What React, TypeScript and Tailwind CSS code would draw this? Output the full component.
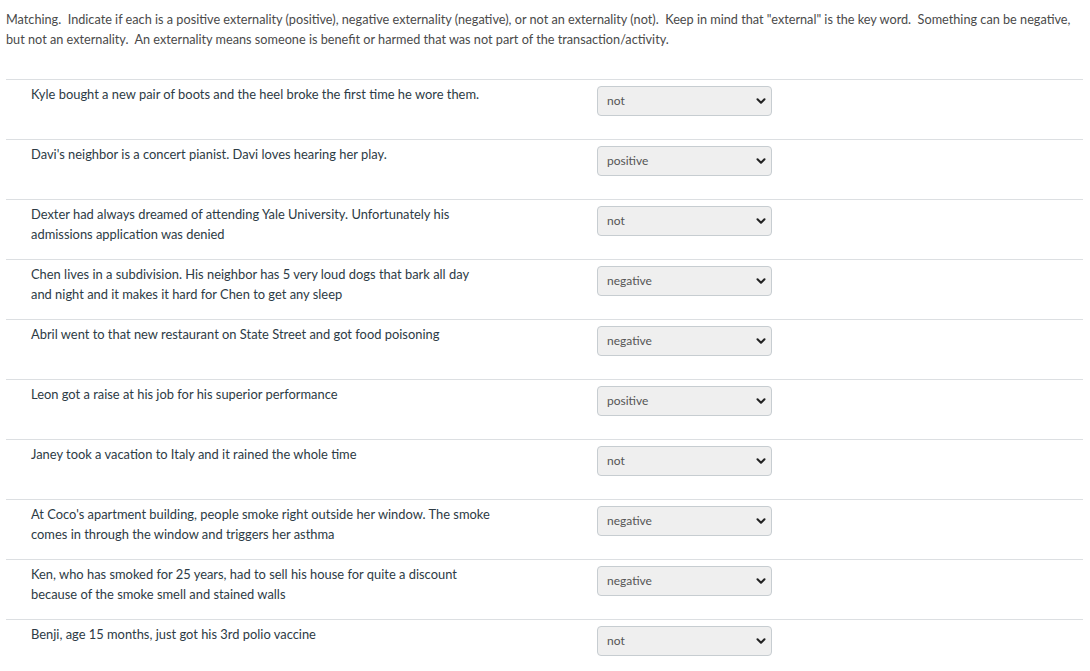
import { ChevronDown } from "lucide-react";

interface Row {
  text: string;
  answer: string;
}

const rows: Row[] = [
  { text: "Kyle bought a new pair of boots and the heel broke the first time he wore them.", answer: "not" },
  { text: "Davi's neighbor is a concert pianist. Davi loves hearing her play.", answer: "positive" },
  { text: "Dexter had always dreamed of attending Yale University. Unfortunately his admissions application was denied", answer: "not" },
  { text: "Chen lives in a subdivision. His neighbor has 5 very loud dogs that bark all day and night and it makes it hard for Chen to get any sleep", answer: "negative" },
  { text: "Abril went to that new restaurant on State Street and got food poisoning", answer: "negative" },
  { text: "Leon got a raise at his job for his superior performance", answer: "positive" },
  { text: "Janey took a vacation to Italy and it rained the whole time", answer: "not" },
  { text: "At Coco's apartment building, people smoke right outside her window. The smoke comes in through the window and triggers her asthma", answer: "negative" },
  { text: "Ken, who has smoked for 25 years, had to sell his house for quite a discount because of the smoke smell and stained walls", answer: "negative" },
  { text: "Benji, age 15 months, just got his 3rd polio vaccine", answer: "not" },
];

function AnswerSelect({ value }: { value: string }) {
  return (
    <div className="flex h-[30px] w-[175px] items-center justify-between rounded-[4px] border border-[#c7cdd1] bg-[#efefef] pl-[9px] pr-[3px] text-[12px] text-[#555]">
      <span>{value}</span>
      <ChevronDown className="h-[14px] w-[14px] text-[#222]" strokeWidth={3.5} />
    </div>
  );
}

export default function App() {
  return (
    <div className="min-h-screen bg-white font-['Lato','Open_Sans',sans-serif]">
      {/* Question prompt */}
      <div className="px-[6px] pt-[9px] text-[12.7px] leading-[20px] text-[#4a4a4a]">
        Matching.&nbsp; Indicate if each is a positive externality (positive), negative externality (negative), or not an externality (not).&nbsp; Keep in mind that "external" is the key word.&nbsp; Something can be negative, but not an externality.&nbsp; An externality means someone is benefit or harmed that was not part of the transaction/activity.
      </div>

      <div className="ml-[6px] mr-[7px] mt-[30px]">
        {rows.map((row, i) => (
          <div key={i} className="flex h-[60px] border-t border-[#dcdfe2]">
            <div className="w-[591px] pl-[25px] pt-[4px]">
              <p className="w-[460px] text-[12.9px] leading-[20px] text-[#2d3b45]">{row.text}</p>
            </div>
            <div className="pt-[6px]">
              <AnswerSelect value={row.answer} />
            </div>
          </div>
        ))}
      </div>
    </div>
  );
}
